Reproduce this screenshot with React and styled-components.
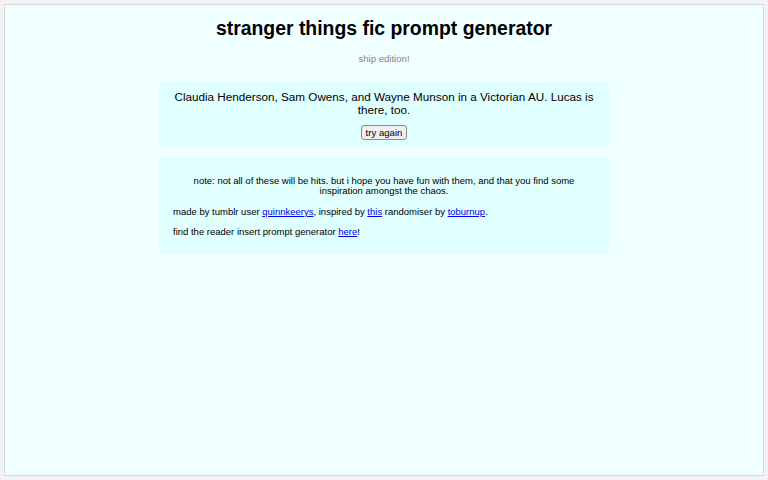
import styled, { createGlobalStyle } from "styled-components";

const GlobalStyle = createGlobalStyle`
  body {
    margin: 4px;
    background: #f3f3f3;
    font-family: "Liberation Sans", Arial, sans-serif;
    color: #000;
  }
`;

const Page = styled.div`
  box-sizing: border-box;
  min-height: calc(100vh - 8px);
  border: 1px solid #dadada;
  background: #f0ffff;
  display: flex;
  flex-direction: column;
  align-items: center;
  padding-top: 12px;
`;

const Title = styled.h1`
  margin: 0;
  font-size: 19.4px;
  line-height: 23px;
  font-weight: bold;
`;

const Subtitle = styled.p`
  margin: 13px 0 0;
  font-size: 9.6px;
  line-height: 12px;
  color: #888;
`;

const Box = styled.div`
  box-sizing: border-box;
  width: 450px;
  margin-top: ${props => props.$top || 10}px;
  padding: ${props => props.$pad};
  background: #e0ffff;
  text-align: ${props => props.$align || "left"};
`;

const Prompt = styled.p`
  margin: 0 auto;
  font-size: 11.7px;
  line-height: 13px;
`;

const Button = styled.button`
  display: inline-block;
  margin-top: 9px;
  font-family: "Liberation Sans", Arial, sans-serif;
  font-size: 9.6px;
  line-height: 11px;
  padding: 1px 4px;
  background: #f0f0f0;
  border: 1px solid #8a8a8a;
  border-radius: 3px;
  color: #000;
`;

const Note = styled.p`
  margin: ${props => props.$margin || "10.5px 0 0"};
  font-size: 9.5px;
  line-height: 10px;
  text-align: ${props => (props.$center ? "center" : "left")};
  padding: ${props => (props.$center ? "0 6px" : "0")};
`;

const Link = styled.a`
  color: #0000ee;
  text-decoration: underline;
`;

const App = () => {
  return (
    <>
      <GlobalStyle />
      <Page>
        <Title>stranger things fic prompt generator</Title>
        <Subtitle>ship edition!</Subtitle>

        <Box $top={17} $pad="8px 14px 8px" $align="center">
          <Prompt>
            Claudia Henderson, Sam Owens, and Wayne Munson in a Victorian AU. Lucas is
            there, too.
          </Prompt>
          <Button>try again</Button>
        </Box>

        <Box $pad="18px 14px 17px">
          <Note $center $margin="0">
            note: not all of these will be hits. but i hope you have fun with them, and that
            you find some inspiration amongst the chaos.
          </Note>
          <Note>
            made by tumblr user <Link href="#">quinnkeerys</Link>, inspired by{" "}
            <Link href="#">this</Link> randomiser by <Link href="#">toburnup</Link>.
          </Note>
          <Note>
            find the reader insert prompt generator <Link href="#">here</Link>!
          </Note>
        </Box>
      </Page>
    </>
  );
};

export default App;
